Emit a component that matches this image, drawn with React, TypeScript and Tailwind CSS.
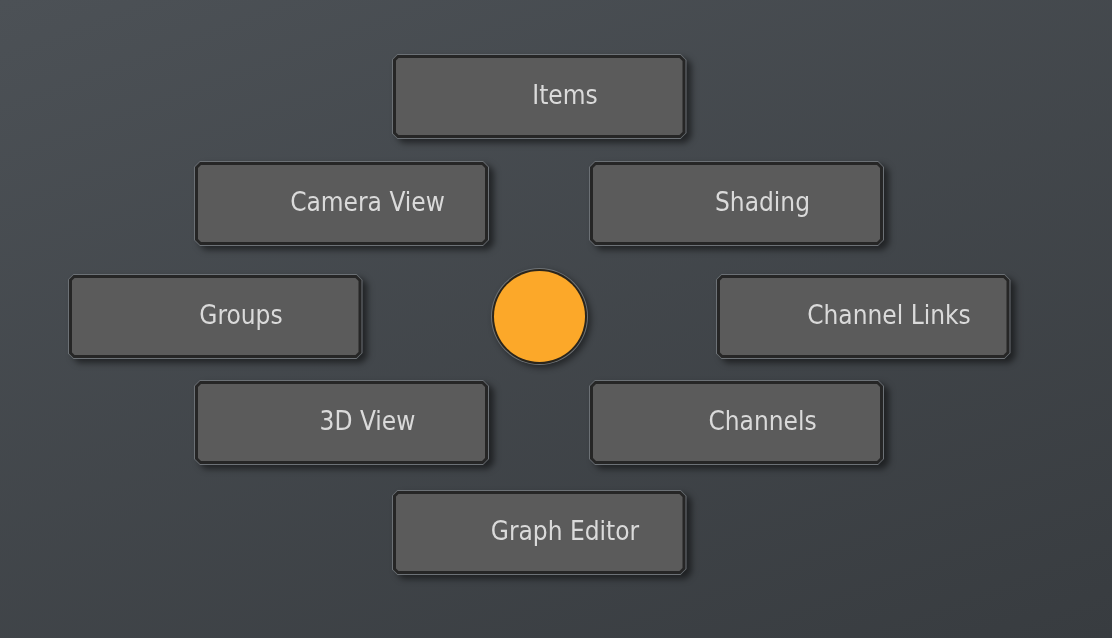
const rows: string[][] = [
  ["Items"],
  ["Camera View", "Shading"],
  ["Groups", "*", "Channel Links"],
  ["3D View", "Channels"],
  ["Graph Editor"],
];

function PieButton({ label }: { label: string }) {
  return (
    <div className="drop-shadow-[5px_4px_3px_rgba(0,0,0,0.5)]">
      <div className="h-[85px] w-[295px] bg-[#6c7176] p-px [clip-path:polygon(6px_0,calc(100%_-_6px)_0,100%_6px,100%_calc(100%_-_6px),calc(100%_-_6px)_100%,6px_100%,0_calc(100%_-_6px),0_6px)]">
        <div className="h-full bg-[#262626] p-[3px] [clip-path:polygon(5px_0,calc(100%_-_5px)_0,100%_5px,100%_calc(100%_-_5px),calc(100%_-_5px)_100%,5px_100%,0_calc(100%_-_5px),0_5px)]">
          <div className="flex h-full items-center justify-center bg-[#5b5b5b] pb-[4px] pl-[52px] font-['DejaVu_Sans_Condensed','DejaVu_Sans',sans-serif] text-[26px] font-stretch-condensed leading-none text-[#dadada] [clip-path:polygon(3px_0,calc(100%_-_3px)_0,100%_3px,100%_calc(100%_-_3px),calc(100%_-_3px)_100%,3px_100%,0_calc(100%_-_3px),0_3px)]">
            {label}
          </div>
        </div>
      </div>
    </div>
  );
}

function Hub() {
  return (
    <div className="mx-[128px] drop-shadow-[3px_3px_3px_rgba(0,0,0,0.45)]">
      <div className="h-[97px] w-[97px] rounded-full bg-[#6c7176] p-px">
        <div className="h-full w-full rounded-full bg-[#2a251c] p-[2px]">
          <div className="h-full w-full rounded-full bg-[#fca829]" />
        </div>
      </div>
    </div>
  );
}

export default function App() {
  const rowGap = ["mt-[54px]", "mt-[22px]", "mt-[22px]", "mt-[15px]", "mt-[25px]"];
  return (
    <div className="h-[638px] w-full overflow-hidden bg-[linear-gradient(160deg,#4c5156,#383c40)]">
      <div className="flex w-[1078px] flex-col items-center">
        {rows.map((row, i) => (
          <div
            key={i}
            className={`flex items-center ${rowGap[i]} ${row.length === 2 ? "gap-[100px]" : ""}`}
          >
            {row.map((label) =>
              label === "*" ? <Hub key={label} /> : <PieButton key={label} label={label} />
            )}
          </div>
        ))}
      </div>
    </div>
  );
}
